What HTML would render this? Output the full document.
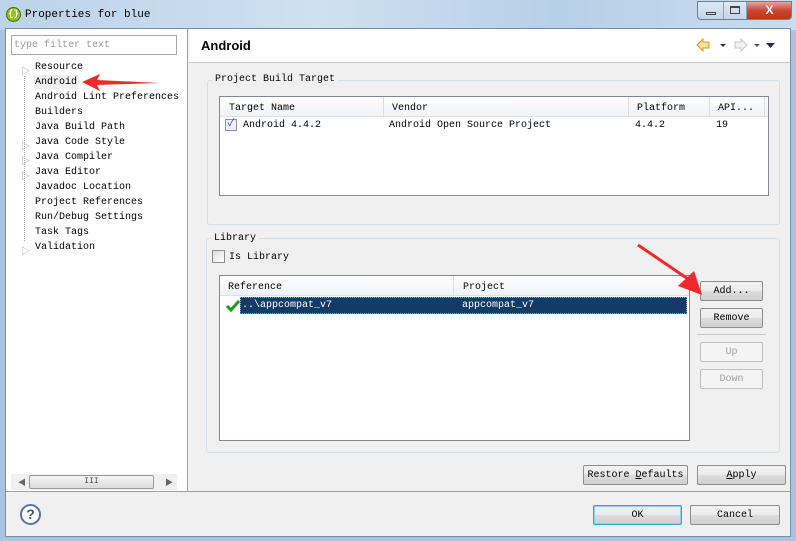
<!DOCTYPE html>
<html><head><style>
*{margin:0;padding:0;box-sizing:border-box}
body{width:796px;height:541px;background:#a9c4df;position:relative;overflow:hidden;font-family:"Liberation Mono","Noto Sans CJK SC",monospace;font-size:10px;color:#000}
.a{position:absolute}
.btn{position:absolute;border:1px solid #8e8f8f;border-radius:2px;background:linear-gradient(#f2f2f2,#ebebeb 50%,#dddddd 51%,#cfcfcf);text-align:center;line-height:19px;font-size:10px}
.dis{color:#a0a0a0;border-color:#c0c0c0;background:#f4f4f4}
.tl{position:absolute;left:35px;font-size:10px}
</style></head><body>
<div class="a" style="left:0;top:0;width:796px;height:30px;background:linear-gradient(90deg,#bcd3ea,#cfe0f1 40%,#b7cfe7 70%,#c9dcef)"></div>
<div class="a" style="left:6px;top:7px;width:15px;height:15px;border-radius:50%;background:#8ec21a;border:1px solid #4a6a08;color:#fff;font-size:9px;line-height:13px;text-align:center;font-weight:bold">{}</div>
<div class="a" style="left:25px;top:9px;font-size:11px">Properties for blue</div>
<div class="a" style="left:697px;top:1px;width:95px;height:19px;border:1px solid #6b7f96;border-radius:0 0 4px 4px;background:linear-gradient(#dfe9f5,#c3d4e8);overflow:hidden">
 <div class="a" style="left:0;top:0;width:26px;height:17px;border-right:1px solid #8aa0b8"><div class="a" style="left:8px;top:10px;width:10px;height:3px;border:1px solid #444"></div></div>
 <div class="a" style="left:26px;top:0;width:23px;height:17px;border-right:1px solid #8aa0b8"><div class="a" style="left:6px;top:4px;width:10px;height:8px;border:1px solid #444;border-top-width:2px"></div></div>
 <div class="a" style="left:49px;top:0;width:45px;height:17px;background:linear-gradient(#e8a597,#c9472f 50%,#c0331a);color:#fff;font-weight:bold;text-align:center;line-height:16px;font-family:'Liberation Sans',sans-serif;font-size:12px">X</div>
</div>
<div class="a" style="left:5px;top:28px;width:786px;height:509px;background:#f0f0f0;border:1px solid #7a8ea5"></div>
<div class="a" style="left:6px;top:29px;width:182px;height:462px;background:#fff;border-right:1px solid #a0a0a0"></div>
<div class="a" style="left:11px;top:35px;width:166px;height:20px;border:1px solid #a8a8a8;color:#9a9a9a;padding:4px 2px">type filter text</div>
<div class="a" style="left:21px;top:64px;color:#999;font-size:9px">▷</div>
<div class="a" style="left:21px;top:139px;color:#999;font-size:9px">▷</div>
<div class="a" style="left:21px;top:154px;color:#999;font-size:9px">▷</div>
<div class="a" style="left:21px;top:169px;color:#999;font-size:9px">▷</div>
<div class="a" style="left:21px;top:244px;color:#999;font-size:9px">▷</div>
<div class="a" style="left:24px;top:76px;height:165px;border-left:1px dotted #aaa"></div>
<div class="a" style="left:34px;top:75px;width:45px;height:14px;background:#efefef"></div>
<div class="tl" style="top:62px">Resource</div>
<div class="tl" style="top:77px">Android</div>
<div class="tl" style="top:92px">Android Lint Preferences</div>
<div class="tl" style="top:107px">Builders</div>
<div class="tl" style="top:122px">Java Build Path</div>
<div class="tl" style="top:137px">Java Code Style</div>
<div class="tl" style="top:152px">Java Compiler</div>
<div class="tl" style="top:167px">Java Editor</div>
<div class="tl" style="top:182px">Javadoc Location</div>
<div class="tl" style="top:197px">Project References</div>
<div class="tl" style="top:212px">Run/Debug Settings</div>
<div class="tl" style="top:227px">Task Tags</div>
<div class="tl" style="top:242px">Validation</div>
<svg class="a" style="left:80px;top:74px" width="82" height="18"><polygon points="2,8 20,0 17,6 80,9 17,11 20,17" fill="#f02a2a"/></svg>
<div class="a" style="left:11px;top:474px;width:166px;height:16px;background:#f0f0f0"></div>
<div class="a" style="left:18px;top:477px;color:#666;font-size:8px">◀</div>
<div class="a" style="left:165px;top:477px;color:#666;font-size:8px">▶</div>
<div class="a" style="left:29px;top:475px;width:125px;height:14px;border:1px solid #999;border-radius:2px;background:linear-gradient(#f5f5f5,#dcdcdc);text-align:center;font-size:8px;line-height:12px;color:#444">III</div>
<div class="a" style="left:189px;top:29px;width:601px;height:34px;background:#fff;border-bottom:1px solid #c8c8c8"></div>
<div class="a" style="left:201px;top:38px;font-family:'Liberation Sans',sans-serif;font-weight:bold;font-size:13px">Android</div>
<svg class="a" style="left:696px;top:38px" width="92" height="14"><path d="M1,7 L7,1 V4 H13 V10 H7 V13 Z" fill="#fbe2a0" stroke="#d29a22"/><path d="M24,6 h6 l-3,3z" fill="#333"/><path d="M51,7 L45,1 V4 H39 V10 H45 V13 Z" fill="#f2f2f2" stroke="#c8c8c8"/><path d="M58,6 h6 l-3,3z" fill="#555"/><path d="M70,5 h9 l-4.5,5z" fill="#2d2a6c"/></svg>
<div class="a" style="left:207px;top:80px;width:573px;height:145px;border:1px solid #d5dfe5;border-radius:3px"></div>
<div class="a" style="left:212px;top:74px;background:#f0f0f0;padding:0 3px">Project Build Target</div>
<div class="a" style="left:219px;top:96px;width:550px;height:100px;background:#fff;border:1px solid #828790"></div>
<div class="a" style="left:220px;top:97px;width:548px;height:20px;background:linear-gradient(#fff,#f1f2f4);border-bottom:1px solid #e0e0e0"></div>
<div class="a" style="left:383px;top:97px;height:20px;border-left:1px solid #dcdcdc"></div>
<div class="a" style="left:628px;top:97px;height:20px;border-left:1px solid #dcdcdc"></div>
<div class="a" style="left:709px;top:97px;height:20px;border-left:1px solid #dcdcdc"></div>
<div class="a" style="left:764px;top:97px;height:20px;border-left:1px solid #dcdcdc"></div>
<div class="a" style="left:229px;top:103px">Target Name</div>
<div class="a" style="left:392px;top:103px">Vendor</div>
<div class="a" style="left:637px;top:103px">Platform</div>
<div class="a" style="left:718px;top:103px">API...</div>
<div class="a" style="left:225px;top:119px;width:12px;height:12px;border:1px solid #8f8f8f;background:#eef;color:#2a4aa0;font-size:10px;line-height:10px;text-align:center">✓</div>
<div class="a" style="left:243px;top:120px">Android 4.4.2</div>
<div class="a" style="left:389px;top:120px">Android Open Source Project</div>
<div class="a" style="left:635px;top:120px">4.4.2</div>
<div class="a" style="left:716px;top:120px">19</div>
<div class="a" style="left:206px;top:238px;width:574px;height:215px;border:1px solid #d5dfe5;border-radius:3px"></div>
<div class="a" style="left:211px;top:233px;background:#f0f0f0;padding:0 3px">Library</div>
<div class="a" style="left:212px;top:250px;width:13px;height:13px;border:1px solid #8f8f8f;background:linear-gradient(135deg,#ddd,#fff)"></div>
<div class="a" style="left:229px;top:252px">Is Library</div>
<div class="a" style="left:219px;top:275px;width:471px;height:166px;background:#fff;border:1px solid #828790"></div>
<div class="a" style="left:220px;top:276px;width:469px;height:20px;background:linear-gradient(#fff,#f1f2f4);border-bottom:1px solid #e0e0e0"></div>
<div class="a" style="left:453px;top:276px;height:20px;border-left:1px solid #dcdcdc"></div>
<div class="a" style="left:228px;top:282px">Reference</div>
<div class="a" style="left:463px;top:282px">Project</div>
<svg class="a" style="left:226px;top:299px" width="14" height="13"><path d="M1,7 L5,11 L13,2" stroke="#1d9a1d" stroke-width="3" fill="none"/></svg>
<div class="a" style="left:240px;top:297px;width:447px;height:17px;background:#143a66;border:1px dotted #c8a040"></div>
<div class="a" style="left:242px;top:300px;color:#fff">..\appcompat_v7</div>
<div class="a" style="left:462px;top:300px;color:#fff">appcompat_v7</div>
<div class="btn" style="left:700px;top:281px;width:63px;height:20px">Add...</div>
<div class="btn" style="left:700px;top:308px;width:63px;height:20px">Remove</div>
<div class="a" style="left:697px;top:334px;width:69px;border-top:1px solid #c8c8c8"></div>
<div class="btn dis" style="left:700px;top:342px;width:63px;height:20px">Up</div>
<div class="btn dis" style="left:700px;top:369px;width:63px;height:20px">Down</div>
<svg class="a" style="left:636px;top:243px" width="72" height="54"><path d="M2,2 L52,36" stroke="#f02a2a" stroke-width="3"/><polygon points="66,52 42,43 58,28" fill="#f02a2a"/></svg>
<div class="btn" style="left:583px;top:465px;width:105px;height:20px"><span>Restore <u>D</u>efaults</span></div>
<div class="btn" style="left:697px;top:465px;width:89px;height:20px"><u>A</u>pply</div>
<div class="a" style="left:6px;top:491px;width:784px;border-top:1px solid #a0a0a0"></div>
<div class="a" style="left:20px;top:504px;width:21px;height:21px;border-radius:50%;border:2px solid #5a72a0;background:#fff;color:#3b5283;font-weight:bold;text-align:center;line-height:17px;font-family:'Liberation Sans',sans-serif;font-size:14px">?</div>
<div class="btn" style="left:593px;top:505px;width:89px;height:20px;border-color:#3aa0d8;box-shadow:inset 0 0 0 1px #8fd0f2">OK</div>
<div class="btn" style="left:690px;top:505px;width:90px;height:20px">Cancel</div>
</body></html>
